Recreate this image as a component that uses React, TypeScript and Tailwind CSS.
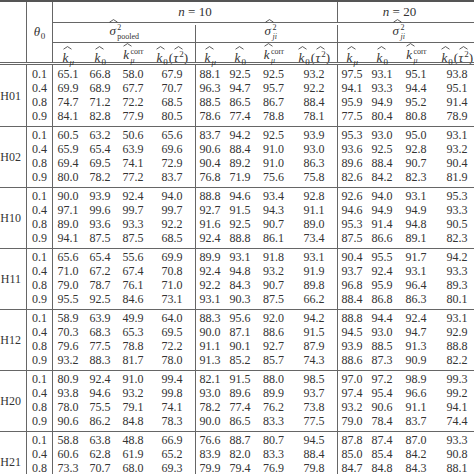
import React from 'react';

const data: [string, string[]][] = [
  ['H01', [
    '0.1 65.1 66.8 58.0 67.9 88.1 92.5 92.5 93.2 97.5 93.1 95.1 93.8',
    '0.4 69.9 68.9 67.7 70.7 96.3 94.7 95.7 92.2 94.1 93.3 94.4 95.1',
    '0.8 74.7 71.2 72.2 68.5 88.5 86.5 86.7 88.4 95.9 94.9 95.2 91.4',
    '0.9 84.1 82.8 77.9 80.5 78.6 77.4 78.8 78.1 77.5 80.4 80.8 78.9',
  ]],
  ['H02', [
    '0.1 60.5 63.2 50.6 65.6 83.7 94.2 92.5 93.9 95.3 93.0 95.0 93.1',
    '0.4 65.9 65.4 63.9 69.6 90.6 88.4 91.0 93.0 93.6 92.5 92.8 93.2',
    '0.8 69.4 69.5 74.1 72.9 90.4 89.2 91.0 86.3 89.6 88.4 90.7 90.4',
    '0.9 80.0 78.2 77.2 83.7 76.8 71.9 75.6 75.8 82.6 84.2 82.3 81.9',
  ]],
  ['H10', [
    '0.1 90.0 93.9 92.4 94.0 88.8 94.6 93.4 92.8 92.6 94.0 93.1 95.3',
    '0.4 97.1 99.6 99.7 99.7 92.7 91.5 94.3 91.1 94.6 94.9 94.9 93.3',
    '0.8 89.0 93.6 93.3 92.2 91.6 92.5 90.7 89.0 95.3 91.4 94.8 90.5',
    '0.9 94.1 87.5 87.5 68.5 92.4 88.8 86.1 73.4 87.5 86.6 89.1 82.3',
  ]],
  ['H11', [
    '0.1 65.6 65.4 55.6 69.9 89.9 93.1 91.8 93.1 90.4 95.5 91.7 94.2',
    '0.4 71.0 67.2 67.4 70.8 92.4 94.8 93.2 91.9 93.7 92.4 93.1 93.3',
    '0.8 79.0 78.7 76.1 71.0 92.2 84.3 90.7 89.8 96.8 95.9 96.4 89.3',
    '0.9 95.5 92.5 84.6 73.1 93.1 90.3 87.5 66.2 88.4 86.8 86.3 80.1',
  ]],
  ['H12', [
    '0.1 58.9 63.9 49.9 64.0 88.3 95.6 92.0 94.2 88.8 94.4 92.4 93.1',
    '0.4 70.3 68.3 65.3 69.5 90.0 87.1 88.6 91.5 94.5 93.0 94.7 92.9',
    '0.8 79.6 77.5 78.8 72.2 91.1 90.1 92.7 87.9 93.9 88.5 91.3 88.8',
    '0.9 93.2 88.3 81.7 78.0 91.3 85.2 85.7 74.3 88.6 87.3 90.9 82.2',
  ]],
  ['H20', [
    '0.1 80.9 92.4 91.0 99.4 82.1 91.5 88.0 98.5 97.0 97.2 98.9 99.3',
    '0.4 93.8 94.6 93.2 99.8 93.0 89.6 89.9 93.7 97.4 95.4 96.6 99.2',
    '0.8 78.0 75.5 79.1 74.1 78.2 77.4 76.2 73.8 93.2 90.6 91.1 94.1',
    '0.9 90.6 86.2 84.8 78.3 90.0 86.5 83.3 77.5 79.0 78.4 83.7 74.4',
  ]],
  ['H21', [
    '0.1 58.8 63.8 48.8 66.9 76.6 88.7 80.7 94.5 87.8 87.4 87.0 93.3',
    '0.4 60.6 62.8 61.9 65.2 83.9 82.0 83.3 88.4 85.0 85.4 84.2 90.8',
    '0.8 73.3 70.7 68.0 69.3 79.9 79.4 76.9 79.8 84.7 84.8 84.3 88.1',
  ]],
];

function Hat({ children }: { children: React.ReactNode }) {
  return (
    <span className="relative inline-block px-[0.5px] italic leading-[13px]">
      {children}
      <svg className="absolute left-[0.5px] top-[-5px]" width="9" height="4" viewBox="0 0 9 4">
        <path d="M0.5 3.2 L4.5 0.6 L8.5 3.2" fill="none" stroke="#333" strokeWidth="0.8" />
      </svg>
    </span>
  );
}

function Sub({ children, italic }: { children: React.ReactNode; italic?: boolean }) {
  return (
    <span className={italic ? 'relative top-[3px] ml-[0.5px] text-[9px] italic' : 'relative top-[3px] ml-[0.5px] text-[9px]'}>
      {children}
    </span>
  );
}

function Sup({ children }: { children: React.ReactNode }) {
  return <span className="relative top-[-5px] ml-[0.5px] text-[9px]">{children}</span>;
}

function Stack({ top, bottom, italicBottom }: { top: string; bottom: string; italicBottom?: boolean }) {
  return (
    <span className="relative top-[-5px] ml-[1px] inline-flex flex-col text-left text-[8px] leading-[9px]">
      <span>{top}</span>
      <span className={italicBottom ? 'italic' : ''}>{bottom}</span>
    </span>
  );
}

const KMu = () => (
  <span>
    <Hat>k</Hat>
    <Sub italic>μ</Sub>
  </span>
);
const K0 = () => (
  <span>
    <Hat>k</Hat>
    <Sub>0</Sub>
  </span>
);
const KCorr = () => (
  <span>
    <Hat>k</Hat>
    <Stack top="corr" bottom="μ" italicBottom />
  </span>
);
const K0Tau = () => (
  <span>
    <Hat>k</Hat>
    <Sub>0</Sub>
    <span className="ml-[1px]">(</span>
    <Hat>τ</Hat>
    <Sup>2</Sup>)
  </span>
);

function HeaderLabels({ cols, border }: { cols: string; border: boolean }) {
  return (
    <div className={`${border ? 'border-r border-[#666]' : ''} ${cols} grid h-full items-center pt-[2px] text-[13px]`}>
      <div className="text-center"><KMu /></div>
      <div className="text-center"><K0 /></div>
      <div className="text-center"><KCorr /></div>
      <div className="whitespace-nowrap text-center"><K0Tau /></div>
    </div>
  );
}

function Block({ rows, from, cols, width, border, pt }: { rows: string[][]; from: number; cols: string; width: string; border: boolean; pt: string }) {
  return (
    <div className={`${width} ${border ? 'border-r border-[#666]' : ''} ${cols} ${pt} grid shrink-0 auto-rows-[14px] content-start`}>
      {rows.flatMap((r, i) =>
        r.slice(from, from + 4).map((v, j) => (
          <div key={`${i}-${j}`} className="text-center leading-[14px]">
            {v}
          </div>
        )),
      )}
    </div>
  );
}

function Group({ label, lines, first }: { label: string; lines: string[]; first: boolean }) {
  const rows = lines.map((l) => l.split(' '));
  const pt = first ? 'pt-[2px]' : 'pt-[1px]';
  return (
    <div className={first ? 'flex h-[61px] shrink-0' : 'flex h-[61px] shrink-0 border-t border-[#666]'}>
      <div className="flex w-[27px] shrink-0 items-center justify-end border-r border-[#666] pr-[5px]">{label}</div>
      <div className={`${pt} flex w-[26px] shrink-0 flex-col items-center border-r border-[#666]`}>
        {rows.map((r, i) => (
          <div key={i} className="h-[14px] leading-[14px]">
            {r[0]}
          </div>
        ))}
      </div>
      <Block rows={rows} from={1} cols="grid-cols-[30px_34px_32px_46px]" width="w-[143px]" border pt={pt} />
      <Block rows={rows} from={5} cols="grid-cols-[28px_32px_35px_46px]" width="w-[142px]" border pt={pt} />
      <Block rows={rows} from={9} cols="grid-cols-[28px_32px_36px_46px]" width="w-[143px]" border={false} pt={pt} />
    </div>
  );
}

export default function App() {
  return (
    <div className="h-[474px] w-[474px] overflow-hidden bg-white [font-family:'Liberation_Serif',serif] text-[12px] text-[#333]">
      <div className="flex w-[481px] flex-col">
        <div className="h-[2px] shrink-0 bg-[#555]" />
        <div className="flex h-[60px] shrink-0">
          <div className="w-[27px] shrink-0 border-r border-[#666]" />
          <div className="flex w-[26px] shrink-0 items-center justify-center border-r border-[#666] text-[13px]">
            <span>
              <span className="italic">θ</span>
              <Sub>0</Sub>
            </span>
          </div>
          <div className="flex w-[428px] flex-col">
            <div className="flex h-[21px] shrink-0 border-b border-[#666] text-[13px]">
              <div className="flex w-[285px] items-center justify-center border-r border-[#666]">
                <span>
                  <span className="italic">n</span> = 10
                </span>
              </div>
              <div className="flex flex-1 items-center justify-center pr-[20px]">
                <span>
                  <span className="italic">n</span> = 20
                </span>
              </div>
            </div>
            <div className="flex h-[20px] shrink-0 border-b border-[#666] pt-[2px] text-[13px]">
              <div className="flex w-[143px] items-center justify-center border-r border-[#666]">
                <span>
                  <Hat>σ</Hat>
                  <Stack top="2" bottom="pooled" />
                </span>
              </div>
              <div className="flex w-[142px] items-center justify-center border-r border-[#666] pl-[8px]">
                <span>
                  <Hat>σ</Hat>
                  <Stack top="2" bottom="ji" italicBottom />
                </span>
              </div>
              <div className="flex flex-1 items-center justify-center pr-[22px]">
                <span>
                  <Hat>σ</Hat>
                  <Stack top="2" bottom="ji" italicBottom />
                </span>
              </div>
            </div>
            <div className="flex h-[19px] shrink-0">
              <div className="w-[143px] shrink-0">
                <HeaderLabels cols="grid-cols-[30px_34px_32px_46px]" border />
              </div>
              <div className="w-[142px] shrink-0">
                <HeaderLabels cols="grid-cols-[28px_32px_35px_46px]" border />
              </div>
              <div className="w-[143px] shrink-0">
                <HeaderLabels cols="grid-cols-[28px_32px_36px_46px]" border={false} />
              </div>
            </div>
          </div>
        </div>
        <div className="h-[3px] shrink-0 border-y border-[#666]" />
        {data.map(([label, lines], i) => (
          <Group key={label} label={label} lines={lines} first={i === 0} />
        ))}
      </div>
    </div>
  );
}
